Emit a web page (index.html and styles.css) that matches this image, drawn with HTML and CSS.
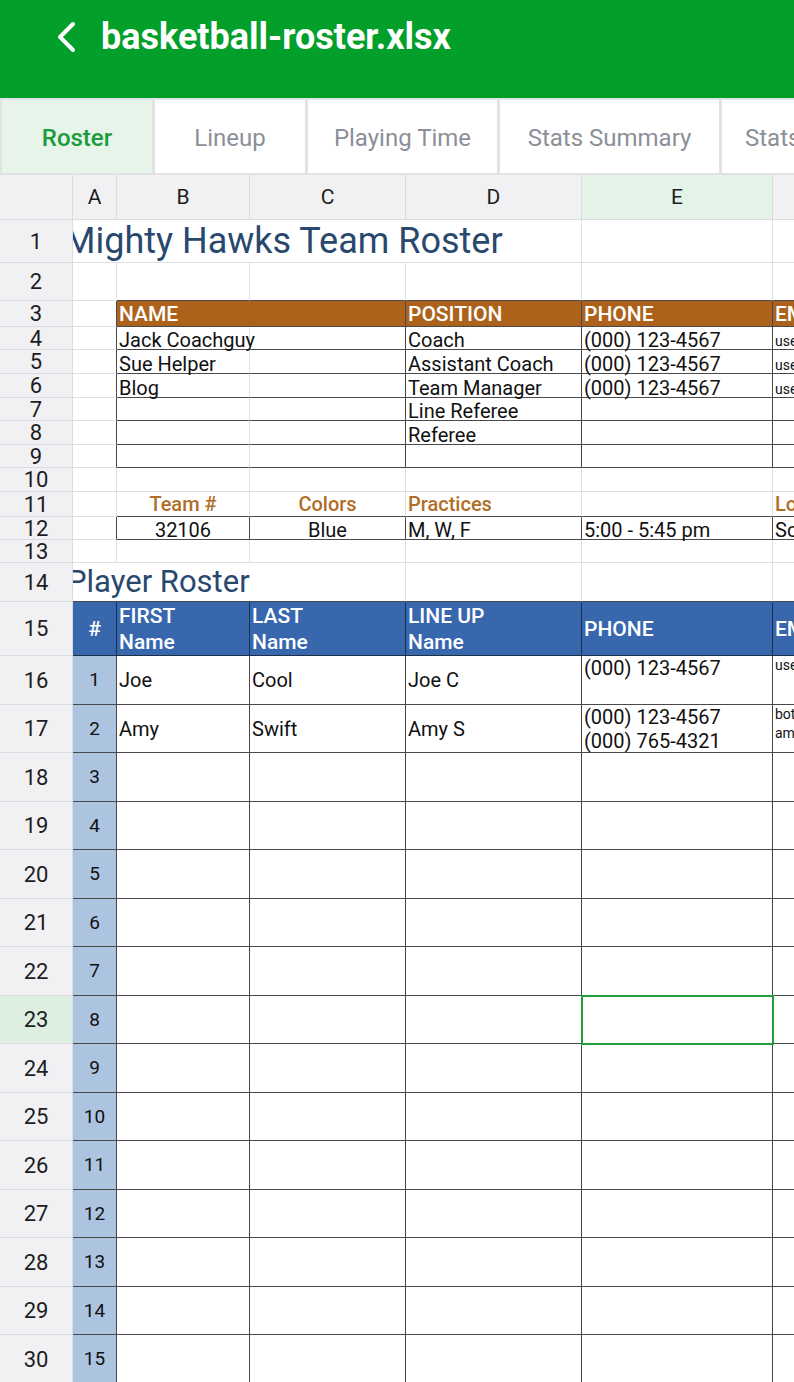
FILE: index.html
```html
<!DOCTYPE html>
<html lang="en">
<head>
<meta charset="utf-8">
<title>basketball-roster.xlsx</title>
<link rel="stylesheet" href="styles.css">
</head>
<body>
<header class="appbar">
  <svg class="back" viewBox="0 0 22 32" aria-hidden="true"><polyline points="18,3 5,16 18,29" fill="none" stroke="#fff" stroke-width="4" stroke-linecap="round" stroke-linejoin="round"/></svg>
  <h1>basketball-roster.xlsx</h1>
</header>
<nav class="tabs">
  <div class="tab active t1">Roster</div>
  <div class="tab t2">Lineup</div>
  <div class="tab t3">Playing Time</div>
  <div class="tab t4">Stats Summary</div>
  <div class="tab t5">Stats Detail</div>
</nav>
<main class="sheet">
  <div class="row">
    <div class="ch corner"></div><div class="ch">A</div><div class="ch">B</div><div class="ch">C</div><div class="ch">D</div><div class="ch act">E</div><div class="ch">F</div>
  </div>
  <div class="row">
    <div class="rh">1</div><div class="c title">Mighty Hawks Team Roster</div><div class="c"></div><div class="c"></div>
  </div>
  <div class="row">
    <div class="rh">2</div><div class="c"></div><div class="c db"></div><div class="c db"></div><div class="c db"></div><div class="c db"></div><div class="c db"></div>
  </div>
  <div class="row">
    <div class="rh">3</div><div class="c dr"></div><div class="c hd merge">NAME</div><div class="c hd d"></div><div class="c hd d">POSITION</div><div class="c hd d">PHONE</div><div class="c hd d">EMAIL</div>
  </div>
  <div class="row low">
    <div class="rh">4</div><div class="c dr"></div><div class="c db">Jack Coachguy</div><div class="c d"></div><div class="c d">Coach</div><div class="c d">(000) 123-4567</div><div class="c d sm">user@email.com</div>
  </div>
  <div class="row low">
    <div class="rh">5</div><div class="c dr"></div><div class="c db">Sue Helper</div><div class="c d"></div><div class="c d">Assistant Coach</div><div class="c d">(000) 123-4567</div><div class="c d sm">user@email.com</div>
  </div>
  <div class="row low">
    <div class="rh">6</div><div class="c dr"></div><div class="c db">Blog</div><div class="c d"></div><div class="c d">Team Manager</div><div class="c d">(000) 123-4567</div><div class="c d sm">user@email.com</div>
  </div>
  <div class="row low">
    <div class="rh">7</div><div class="c dr"></div><div class="c db"></div><div class="c d"></div><div class="c d">Line Referee</div><div class="c d"></div><div class="c d"></div>
  </div>
  <div class="row low">
    <div class="rh">8</div><div class="c dr"></div><div class="c db"></div><div class="c d"></div><div class="c d">Referee</div><div class="c d"></div><div class="c d"></div>
  </div>
  <div class="row low">
    <div class="rh">9</div><div class="c dr"></div><div class="c db"></div><div class="c d"></div><div class="c d"></div><div class="c d"></div><div class="c d"></div>
  </div>
  <div class="row">
    <div class="rh">10</div><div class="c"></div><div class="c"></div><div class="c"></div><div class="c"></div><div class="c"></div><div class="c"></div>
  </div>
  <div class="row">
    <div class="rh">11</div><div class="c"></div><div class="c db or ctr">Team #</div><div class="c db or ctr">Colors</div><div class="c db or">Practices</div><div class="c db"></div><div class="c db or">Location</div>
  </div>
  <div class="row low">
    <div class="rh">12</div><div class="c dr"></div><div class="c d ctr">32106</div><div class="c d ctr">Blue</div><div class="c d">M, W, F</div><div class="c d">5:00 - 5:45 pm</div><div class="c d">School Gym</div>
  </div>
  <div class="row">
    <div class="rh">13</div><div class="c"></div><div class="c"></div><div class="c"></div><div class="c"></div><div class="c"></div><div class="c"></div>
  </div>
  <div class="row">
    <div class="rh">14</div><div class="c title title2 db">Player Roster</div><div class="c db"></div><div class="c db"></div><div class="c db"></div>
  </div>
  <div class="row">
    <div class="rh">15</div><div class="c bh ctr">#</div><div class="c bh">FIRST<br>Name</div><div class="c bh">LAST<br>Name</div><div class="c bh">LINE UP<br>Name</div><div class="c bh">PHONE</div><div class="c bh">EMAIL</div>
  </div>
  <div class="row">
    <div class="rh">16</div><div class="c num d">1</div><div class="c d">Joe</div><div class="c d">Cool</div><div class="c d">Joe C</div><div class="c d top">(000) 123-4567</div><div class="c d top sm">user@email.com</div>
  </div>
  <div class="row">
    <div class="rh">17</div><div class="c num d">2</div><div class="c d">Amy</div><div class="c d">Swift</div><div class="c d">Amy S</div><div class="c d two">(000) 123-4567<br>(000) 765-4321</div><div class="c d top sm">both@email.com<br>amy@email.com</div>
  </div>
  <div class="row">
    <div class="rh">18</div><div class="c num d">3</div><div class="c d"></div><div class="c d"></div><div class="c d"></div><div class="c d"></div><div class="c d"></div>
  </div>
  <div class="row">
    <div class="rh">19</div><div class="c num d">4</div><div class="c d"></div><div class="c d"></div><div class="c d"></div><div class="c d"></div><div class="c d"></div>
  </div>
  <div class="row">
    <div class="rh">20</div><div class="c num d">5</div><div class="c d"></div><div class="c d"></div><div class="c d"></div><div class="c d"></div><div class="c d"></div>
  </div>
  <div class="row">
    <div class="rh">21</div><div class="c num d">6</div><div class="c d"></div><div class="c d"></div><div class="c d"></div><div class="c d"></div><div class="c d"></div>
  </div>
  <div class="row">
    <div class="rh">22</div><div class="c num d">7</div><div class="c d"></div><div class="c d"></div><div class="c d"></div><div class="c d"></div><div class="c d"></div>
  </div>
  <div class="row">
    <div class="rh act">23</div><div class="c num d">8</div><div class="c d"></div><div class="c d"></div><div class="c d"></div><div class="c d sel"></div><div class="c d"></div>
  </div>
  <div class="row">
    <div class="rh">24</div><div class="c num d">9</div><div class="c d"></div><div class="c d"></div><div class="c d"></div><div class="c d"></div><div class="c d"></div>
  </div>
  <div class="row">
    <div class="rh">25</div><div class="c num d">10</div><div class="c d"></div><div class="c d"></div><div class="c d"></div><div class="c d"></div><div class="c d"></div>
  </div>
  <div class="row">
    <div class="rh">26</div><div class="c num d">11</div><div class="c d"></div><div class="c d"></div><div class="c d"></div><div class="c d"></div><div class="c d"></div>
  </div>
  <div class="row">
    <div class="rh">27</div><div class="c num d">12</div><div class="c d"></div><div class="c d"></div><div class="c d"></div><div class="c d"></div><div class="c d"></div>
  </div>
  <div class="row">
    <div class="rh">28</div><div class="c num d">13</div><div class="c d"></div><div class="c d"></div><div class="c d"></div><div class="c d"></div><div class="c d"></div>
  </div>
  <div class="row">
    <div class="rh">29</div><div class="c num d">14</div><div class="c d"></div><div class="c d"></div><div class="c d"></div><div class="c d"></div><div class="c d"></div>
  </div>
  <div class="row">
    <div class="rh">30</div><div class="c num d">15</div><div class="c d"></div><div class="c d"></div><div class="c d"></div><div class="c d"></div><div class="c d"></div>
  </div>
</main>
</body>
</html>
```

FILE: styles.css
```css
* { box-sizing: border-box; }
html, body { margin: 0; padding: 0; }
body {
  width: 794px;
  height: 1382px;
  overflow: hidden;
  background: #fff;
  font-family: Roboto, "Liberation Sans", sans-serif;
  color: #111;
}

/* App bar */
.appbar {
  height: 98px;
  background: #02a02b;
  color: #fff;
  display: flex;
  align-items: center;
  padding: 0 0 24px 55px;
}
.appbar .back { width: 22px; height: 32px; flex: none; margin-right: 24px; }
.appbar h1 {
  margin: 0;
  font-size: 36px;
  font-weight: 700;
  letter-spacing: 0;
  white-space: nowrap;
}

/* Sheet tabs */
.tabs {
  height: 77px;
  background: #e2e2e5;
  display: flex;
  gap: 3px;
  padding: 2px 0 2px 2px;
  overflow: hidden;
}
.tab {
  flex: none;
  background: #fff;
  display: flex;
  align-items: center;
  justify-content: center;
  padding-top: 2px;
  font-size: 24px;
  color: #8b8f98;
  white-space: nowrap;
}
.tab.active { background: #e6f4e9; color: #1b9b3a; font-weight: 500; }
.t1 { width: 150px; }
.t2 { width: 150px; }
.t3 { width: 189px; }
.t4 { width: 219px; }
.t5 { width: 160px; justify-content: flex-start; padding-left: 23px; }

/* Grid */
.sheet {
  width: 794px;
  height: 1207px;
  overflow: hidden;
  display: grid;
  grid-template-columns: 73px 44px 133px 156px 176px 191px 200px;
  grid-template-rows: 45px 43px 38px 26px 23px 24px 24px 23px 24px 23px 24px 25px 23px 23px 39px 54px 49px 48px repeat(6, 49px 48px) 49px;
}
.row { display: contents; }

.ch {
  background: #f1f1f3;
  border-right: 1px solid #dcdce0;
  border-bottom: 1px solid #dcdce0;
  display: flex;
  align-items: center;
  justify-content: center;
  font-size: 21px;
  color: #1d1d1f;
}
.ch.act { background: #e4f3e7; }

.rh {
  background: #f1f1f3;
  border-right: 1px solid #dcdce0;
  border-bottom: 1px solid #dcdce0;
  display: flex;
  align-items: center;
  justify-content: center;
  font-size: 22px;
  color: #1d1d1f;
}
.rh.act { background: #ddefe1; }

.c {
  border-right: 1px solid #e0e0e3;
  border-bottom: 1px solid #e0e0e3;
  display: flex;
  align-items: center;
  padding-left: 2px;
  font-size: 20px;
  line-height: 24px;
  color: #111;
  white-space: nowrap;
  min-width: 0;
}
.c:last-child { overflow: hidden; }

.row.low > .c { align-items: flex-end; line-height: 18px; }

.d { border-right-color: #4a4a4a; border-bottom-color: #4a4a4a; }
.dr { border-right-color: #4a4a4a; }
.db { border-bottom-color: #4a4a4a; }

.title {
  grid-column: span 4;
  overflow: hidden;
  font-size: 36px;
  line-height: 42px;
  color: #28486e;
  padding-left: 0;
  text-indent: -9px;
}
.title2 {
  grid-column: span 3;
  font-size: 31px;
  line-height: 38px;
  text-indent: -6px;
}

.hd {
  background: #ad621b;
  color: #fff;
  font-size: 21px;
  font-weight: 500;
  border-right-color: #4a4a4a;
  border-bottom-color: #4a4a4a;
}
.hd.merge { border-right-color: #ad621b; }

.or { color: #b06e28; font-weight: 500; }
.ctr { justify-content: center; padding-left: 0; }

.bh {
  background: #3867ae;
  color: #fff;
  font-size: 21px;
  font-weight: 500;
  line-height: 26px;
  border-right-color: #1f2f4a;
  border-bottom-color: #1f2f4a;
}

.num {
  background: #adc4e0;
  justify-content: center;
  padding-left: 0;
  font-size: 19px;
}

.top { align-items: flex-start; }
.two { line-height: 24px; }
.sm { font-size: 14px; line-height: 19px; }
.row.low > .c.sm { line-height: 15px; }

.sel {
  position: relative;
  z-index: 1;
  outline: 2px solid #1f9c3c;
  outline-offset: -1px;
}
```
